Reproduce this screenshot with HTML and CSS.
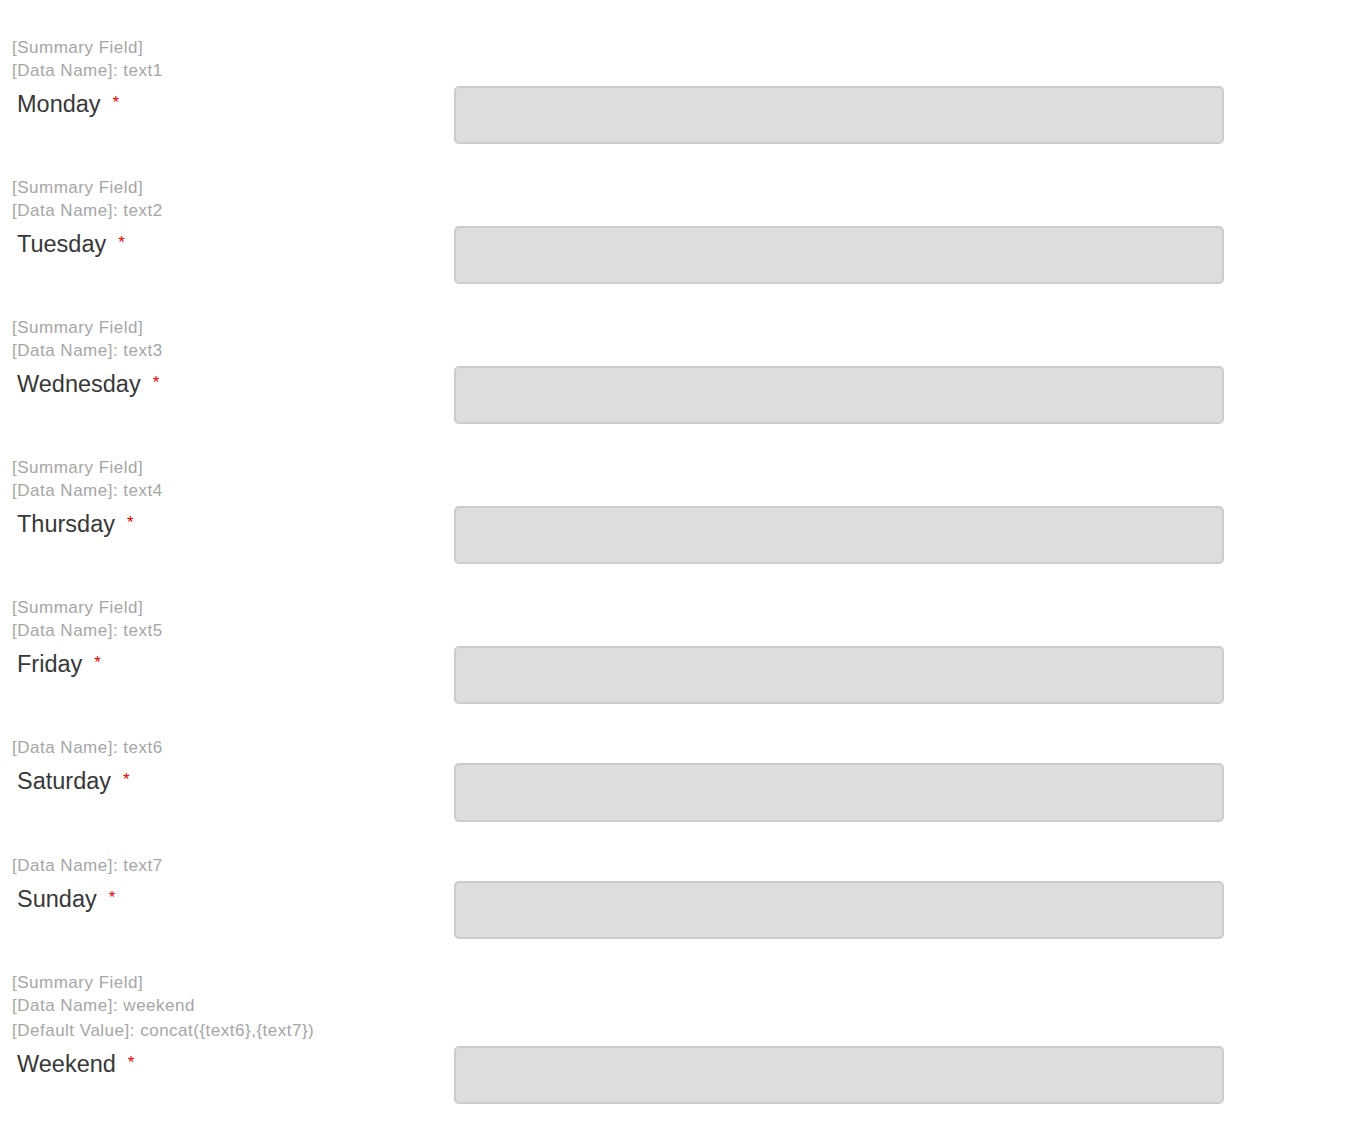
FILE: index.html
```html
<!DOCTYPE html>
<html>
<head>
<meta charset="utf-8">
<link rel="stylesheet" href="styles.css">
</head>
<body>
<div class="form">
  <div class="field">
    <div class="meta">[Summary Field]</div>
    <div class="meta">[Data Name]: text1</div>
    <div class="row">
      <div class="label">Monday<span class="req">*</span></div>
      <div class="input"></div>
    </div>
  </div>
  <div class="field">
    <div class="meta">[Summary Field]</div>
    <div class="meta">[Data Name]: text2</div>
    <div class="row">
      <div class="label">Tuesday<span class="req">*</span></div>
      <div class="input"></div>
    </div>
  </div>
  <div class="field">
    <div class="meta">[Summary Field]</div>
    <div class="meta">[Data Name]: text3</div>
    <div class="row">
      <div class="label">Wednesday<span class="req">*</span></div>
      <div class="input"></div>
    </div>
  </div>
  <div class="field">
    <div class="meta">[Summary Field]</div>
    <div class="meta">[Data Name]: text4</div>
    <div class="row">
      <div class="label">Thursday<span class="req">*</span></div>
      <div class="input"></div>
    </div>
  </div>
  <div class="field">
    <div class="meta">[Summary Field]</div>
    <div class="meta">[Data Name]: text5</div>
    <div class="row">
      <div class="label">Friday<span class="req">*</span></div>
      <div class="input"></div>
    </div>
  </div>
  <div class="field">
    <div class="meta">[Data Name]: text6</div>
    <div class="row">
      <div class="label">Saturday<span class="req">*</span></div>
      <div class="input"></div>
    </div>
  </div>
  <div class="field">
    <div class="meta">[Data Name]: text7</div>
    <div class="row">
      <div class="label">Sunday<span class="req">*</span></div>
      <div class="input"></div>
    </div>
  </div>
  <div class="field">
    <div class="meta">[Summary Field]</div>
    <div class="meta">[Data Name]: weekend</div>
    <div class="meta meta-default">[Default Value]: concat({text6},{text7})</div>
    <div class="row">
      <div class="label">Weekend<span class="req">*</span></div>
      <div class="input"></div>
    </div>
  </div>
</div>
</body>
</html>
```
FILE: styles.css
```css
html, body {
  margin: 0;
  padding: 0;
  background: #ffffff;
}
body {
  font-family: "Liberation Sans", Arial, sans-serif;
}
.form {
  padding: 37px 0 0 12px;
  display: flex;
  flex-direction: column;
}
.field {
  margin-bottom: 33px;
}
.meta {
  font-size: 17px;
  line-height: 22.5px;
  letter-spacing: 0.5px;
  color: #a6a6a6;
}
.meta-default {
  margin-top: 2.5px;
}
.row {
  display: flex;
  align-items: flex-start;
  margin-top: 3.5px;
}
.label {
  width: 442px;
  padding-left: 5px;
  box-sizing: border-box;
  font-size: 23.5px;
  line-height: 33px;
  color: #383838;
}
.req {
  color: #ee0000;
  font-size: 17px;
  margin-left: 12px;
  vertical-align: 4px;
}
.input {
  width: 770px;
  height: 58.5px;
  box-sizing: border-box;
  background: #dddddd;
  border: 2px solid #cccccc;
  border-radius: 5px;
}
```
